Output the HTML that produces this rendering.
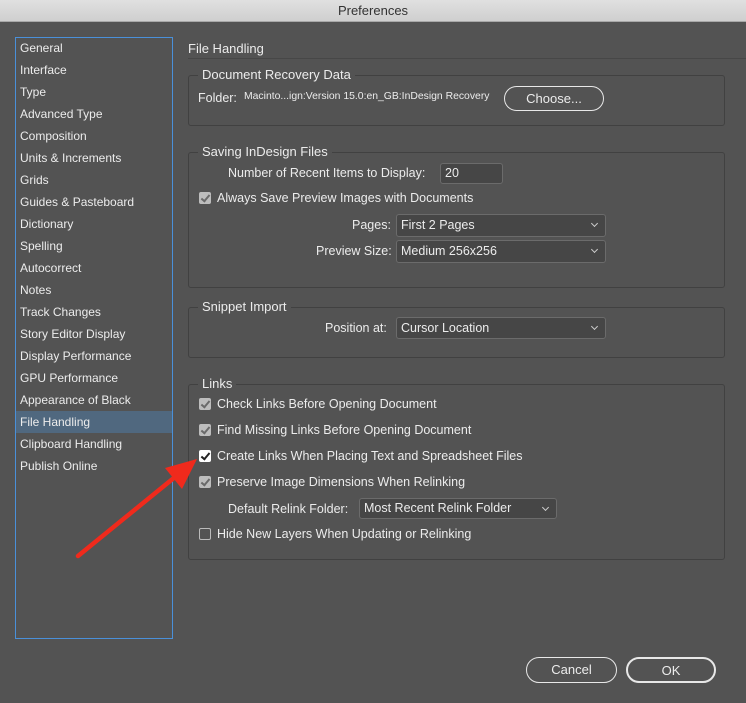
<!DOCTYPE html>
<html><head><style>
*{box-sizing:border-box;margin:0;padding:0}
body{width:746px;height:703px;background:#535353;font-family:"Liberation Sans",sans-serif;font-size:12px;color:#ececec;position:relative;overflow:hidden}
.a{position:absolute;white-space:nowrap}
.title{left:0;top:0;width:746px;height:22px;background:linear-gradient(#e0e0e0,#cfcfcf);border-bottom:1px solid #a8a8a8;color:#333;font-size:13px;text-align:center;line-height:22px}
.side{left:15px;top:37px;width:158px;height:602px;border:1px solid #4a90d9;background:#535353}
.it{left:20px;height:22px;line-height:22px}
.sel{left:16px;width:156px;background:#50687f;height:22px;top:411px}
.grp{border:1px solid #414141;border-radius:3px;left:188px;width:537px}
.lg{font-size:13px;background:#535353;padding:0 4px;left:198px;line-height:14px}
.sl{background:#464646;border:1px solid #6b6b6b;border-radius:3px;padding-left:4px;line-height:20px;font-size:12.5px}
.dd:after{content:"";position:absolute;right:8px;top:6px;width:4px;height:4px;border-right:1px solid #ccc;border-bottom:1px solid #ccc;transform:rotate(45deg)}
.cb{width:12px;height:12px;border-radius:2px;background:#bdbdbd;left:199px}
.cb:after{content:"";position:absolute;left:4px;top:1px;width:3px;height:7px;border-right:2px solid #6a6a6a;border-bottom:2px solid #6a6a6a;transform:rotate(40deg)}
.cb.w{background:#fff}.cb.w:after{border-color:#222}
.cb.e{background:none;border:1px solid #bbb}.cb.e:after{display:none}
.btn{border:1.5px solid #e8e8e8;border-radius:13px;text-align:center;font-size:13px}
.t{font-size:12.5px}
</style></head><body>
<div class="a title">Preferences</div>
<div class="a side"></div>
<div class="a sel"></div>
<div class="a it" style="top:37px">General</div>
<div class="a it" style="top:59px">Interface</div>
<div class="a it" style="top:81px">Type</div>
<div class="a it" style="top:103px">Advanced Type</div>
<div class="a it" style="top:125px">Composition</div>
<div class="a it" style="top:147px">Units &amp; Increments</div>
<div class="a it" style="top:169px">Grids</div>
<div class="a it" style="top:191px">Guides &amp; Pasteboard</div>
<div class="a it" style="top:213px">Dictionary</div>
<div class="a it" style="top:235px">Spelling</div>
<div class="a it" style="top:257px">Autocorrect</div>
<div class="a it" style="top:279px">Notes</div>
<div class="a it" style="top:301px">Track Changes</div>
<div class="a it" style="top:323px">Story Editor Display</div>
<div class="a it" style="top:345px">Display Performance</div>
<div class="a it" style="top:367px">GPU Performance</div>
<div class="a it" style="top:389px">Appearance of Black</div>
<div class="a it" style="top:411px">File Handling</div>
<div class="a it" style="top:433px">Clipboard Handling</div>
<div class="a it" style="top:455px">Publish Online</div>

<div class="a" style="left:188px;top:41px;font-size:13px">File Handling</div>
<div class="a" style="left:188px;top:58px;width:558px;height:1px;background:#474747"></div>

<div class="a grp" style="top:75px;height:51px"></div>
<div class="a lg" style="top:68px">Document Recovery Data</div>
<div class="a t" style="left:198px;top:91px">Folder:</div>
<div class="a" style="left:244px;top:91px;font-size:10.4px">Macinto...ign:Version 15.0:en_GB:InDesign Recovery</div>
<div class="a btn" style="left:504px;top:86px;width:100px;height:25px;line-height:23px">Choose...</div>

<div class="a grp" style="top:152px;height:136px"></div>
<div class="a lg" style="top:145px">Saving InDesign Files</div>
<div class="a t" style="left:228px;top:166px">Number of Recent Items to Display:</div>
<div class="a sl" style="left:440px;top:163px;width:63px;height:21px;line-height:19px">20</div>
<div class="a cb" style="top:192px"></div>
<div class="a t" style="left:217px;top:191px">Always Save Preview Images with Documents</div>
<div class="a t" style="left:352px;top:218px">Pages:</div>
<div class="a sl dd" style="left:396px;top:214px;width:210px;height:23px">First 2 Pages</div>
<div class="a t" style="left:316px;top:244px">Preview Size:</div>
<div class="a sl dd" style="left:396px;top:240px;width:210px;height:23px">Medium 256x256</div>

<div class="a grp" style="top:307px;height:51px"></div>
<div class="a lg" style="top:300px">Snippet Import</div>
<div class="a t" style="left:325px;top:321px">Position at:</div>
<div class="a sl dd" style="left:396px;top:317px;width:210px;height:22px">Cursor Location</div>

<div class="a grp" style="top:384px;height:176px"></div>
<div class="a lg" style="top:377px">Links</div>
<div class="a cb" style="top:398px"></div>
<div class="a t" style="left:217px;top:397px">Check Links Before Opening Document</div>
<div class="a cb" style="top:424px"></div>
<div class="a t" style="left:217px;top:423px">Find Missing Links Before Opening Document</div>
<div class="a cb w" style="top:450px"></div>
<div class="a t" style="left:217px;top:449px">Create Links When Placing Text and Spreadsheet Files</div>
<div class="a cb" style="top:476px"></div>
<div class="a t" style="left:217px;top:475px">Preserve Image Dimensions When Relinking</div>
<div class="a t" style="left:228px;top:502px">Default Relink Folder:</div>
<div class="a sl dd" style="left:359px;top:498px;width:198px;height:21px;line-height:19px">Most Recent Relink Folder</div>
<div class="a cb e" style="top:528px"></div>
<div class="a t" style="left:217px;top:527px">Hide New Layers When Updating or Relinking</div>

<div class="a btn" style="left:526px;top:657px;width:91px;height:26px;line-height:23px">Cancel</div>
<div class="a btn" style="left:626px;top:657px;width:90px;height:26px;line-height:23px;border-width:2px">OK</div>

<svg class="a" style="left:0;top:0" width="746" height="703">
<line x1="78" y1="556" x2="175" y2="477" stroke="#f02a1c" stroke-width="4.5" stroke-linecap="round"/>
<polygon points="197,459 165,468 182,489" fill="#f02a1c"/>
</svg>
</body></html>
